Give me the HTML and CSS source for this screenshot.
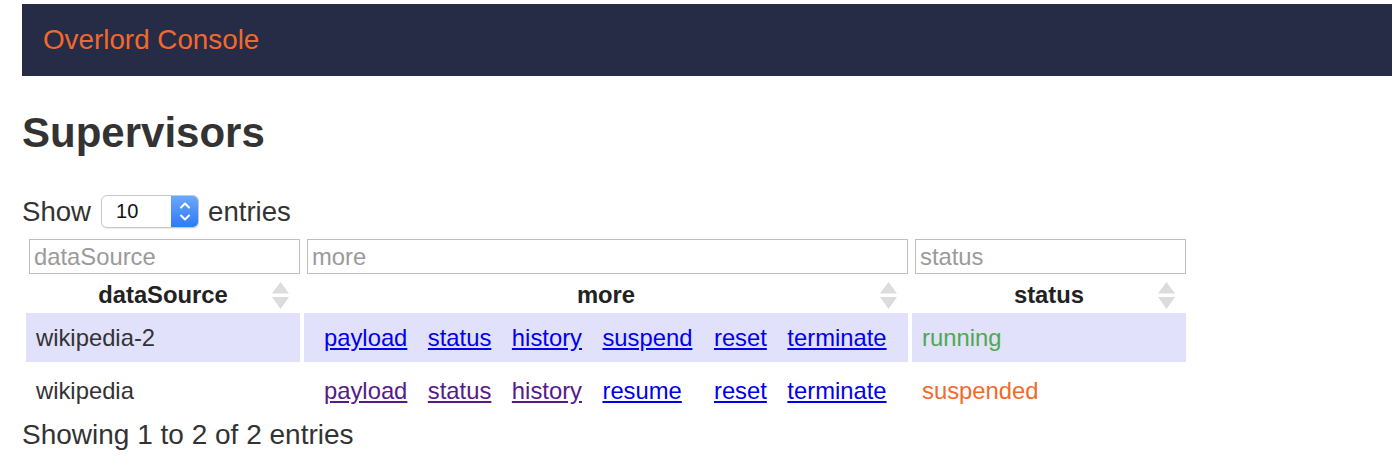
FILE: index.html
```html
<!DOCTYPE html>
<html>
<head>
<meta charset="utf-8">
<title>Overlord Console</title>
<link rel="stylesheet" href="styles.css">
</head>
<body>
<div class="topbar"><span class="brand">Overlord Console</span></div>
<div class="content">
  <h1 class="page-title">Supervisors</h1>
  <div class="length">
    <span>Show</span>
    <div class="select">
      <span class="select-value">10</span>
      <span class="select-arrows">
        <svg width="28" height="33" viewBox="0 0 28 33"><path d="M10 12.5 L14 8.5 L18 12.5" fill="none" stroke="#fff" stroke-width="2" stroke-linecap="round" stroke-linejoin="round"/><path d="M10 20.5 L14 24.5 L18 20.5" fill="none" stroke="#fff" stroke-width="2" stroke-linecap="round" stroke-linejoin="round"/></svg>
      </span>
    </div>
    <span>entries</span>
  </div>
  <table class="grid">
    <colgroup><col class="c1"><col class="c2"><col class="c3"></colgroup>
    <thead>
      <tr class="filters">
        <td><input class="filter" placeholder="dataSource"></td>
        <td><input class="filter" placeholder="more"></td>
        <td><input class="filter" placeholder="status"></td>
      </tr>
      <tr class="heads">
        <th>dataSource<svg class="sort" width="17" height="28" viewBox="0 0 17 28"><path d="M8.5 0 L17 11.5 L0 11.5 Z" fill="#dcdcdc"/><path d="M0 15 L17 15 L8.5 27 Z" fill="#dcdcdc"/></svg></th>
        <th>more<svg class="sort" width="17" height="28" viewBox="0 0 17 28"><path d="M8.5 0 L17 11.5 L0 11.5 Z" fill="#dcdcdc"/><path d="M0 15 L17 15 L8.5 27 Z" fill="#dcdcdc"/></svg></th>
        <th>status<svg class="sort" width="17" height="28" viewBox="0 0 17 28"><path d="M8.5 0 L17 11.5 L0 11.5 Z" fill="#dcdcdc"/><path d="M0 15 L17 15 L8.5 27 Z" fill="#dcdcdc"/></svg></th>
      </tr>
    </thead>
    <tbody>
      <tr class="odd">
        <td>wikipedia-2</td>
        <td class="actions"><a href="#" class="lnk">payload</a><a href="#" class="lnk">status</a><a href="#" class="lnk">history</a><span class="slot"><a href="#" class="lnk">suspend</a></span><a href="#" class="lnk">reset</a><a href="#" class="lnk">terminate</a></td>
        <td class="st running">running</td>
      </tr>
      <tr class="even">
        <td>wikipedia</td>
        <td class="actions"><a href="#" class="lnk visited">payload</a><a href="#" class="lnk visited">status</a><a href="#" class="lnk visited">history</a><span class="slot"><a href="#" class="lnk">resume</a></span><a href="#" class="lnk">reset</a><a href="#" class="lnk">terminate</a></td>
        <td class="st suspended">suspended</td>
      </tr>
    </tbody>
  </table>
  <div class="info">Showing 1 to 2 of 2 entries</div>
</div>
</body>
</html>
```

FILE: styles.css
```css
html, body {
  margin: 0;
  padding: 0;
  background: #fff;
}
body {
  font-family: "Liberation Sans", Arial, Helvetica, sans-serif;
  color: #333;
  font-size: 27.6px;
}
.topbar {
  margin: 4px 0 0 22px;
  height: 72px;
  background: #262b46;
  display: flex;
  align-items: center;
  padding-left: 21px;
}
.brand {
  color: #f2692c;
  font-size: 27.8px;
}
.content {
  padding-left: 22px;
}
.page-title {
  margin: 33px 0 0;
  font-size: 42px;
  line-height: 48px;
  font-weight: bold;
  color: #333;
}
.length {
  margin-top: 38px;
  height: 33px;
  display: flex;
  align-items: center;
  color: #333;
}
.select {
  margin: 0 9px 0 10px;
  width: 98px;
  height: 33px;
  box-sizing: border-box;
  border: 1px solid #c8c8c8;
  border-radius: 6px;
  background: #fff;
  display: flex;
  align-items: center;
  justify-content: space-between;
  box-shadow: 0 1px 1px rgba(0,0,0,0.08);
  overflow: hidden;
}
.select-value {
  font-size: 20px;
  color: #111;
  padding-left: 14px;
}
.select-arrows {
  width: 28px;
  height: 33px;
  margin-top: -1px;
  margin-right: -1px;
  background: linear-gradient(#6ea9f9, #2b79f5);
  display: flex;
}
.grid {
  margin-top: 7px;
  margin-left: 0;
  border-collapse: separate;
  border-spacing: 4px;
  table-layout: fixed;
  width: 1168px;
  font-size: 23.8px;
}
.c1 { width: 274px; }
.c2 { width: 604px; }
.c3 { width: 274px; }
.filters td {
  padding: 0 0 0 3px;
  height: 35px;
}
.filter {
  width: 100%;
  height: 35px;
  box-sizing: border-box;
  border: 1px solid #bfbfbf;
  padding: 0 4px;
  margin: 0;
  font-family: "Liberation Sans", Arial, sans-serif;
  font-size: 23.8px;
  color: #333;
  display: block;
  outline: none;
}
.filter::placeholder {
  color: #9a9a9a;
}
.heads th {
  position: relative;
  height: 31px;
  padding: 2px 0 0;
  box-sizing: border-box;
  font-weight: bold;
  color: #222;
  text-align: center;
  vertical-align: middle;
}
.sort {
  position: absolute;
  right: 11px;
  top: 4px;
}
tbody td {
  height: 49px;
  padding: 0 10px;
  box-sizing: border-box;
  vertical-align: middle;
  color: #333;
  white-space: nowrap;
}
tbody tr.odd td {
  background: #e1e1fb;
}
td.actions {
  padding-left: 20px;
}
.lnk {
  color: #0000ee;
  text-decoration: underline;
  margin-right: 20.5px;
}
.lnk.visited {
  color: #551a8b;
}
.slot {
  display: inline-block;
  width: 91px;
  margin-right: 20.5px;
}
.slot .lnk {
  margin-right: 0;
}
.st.running {
  color: #4fa84f;
}
.st.suspended {
  color: #f2692c;
}
.info {
  color: #333;
  font-size: 28px;
  line-height: 31px;
}
```
